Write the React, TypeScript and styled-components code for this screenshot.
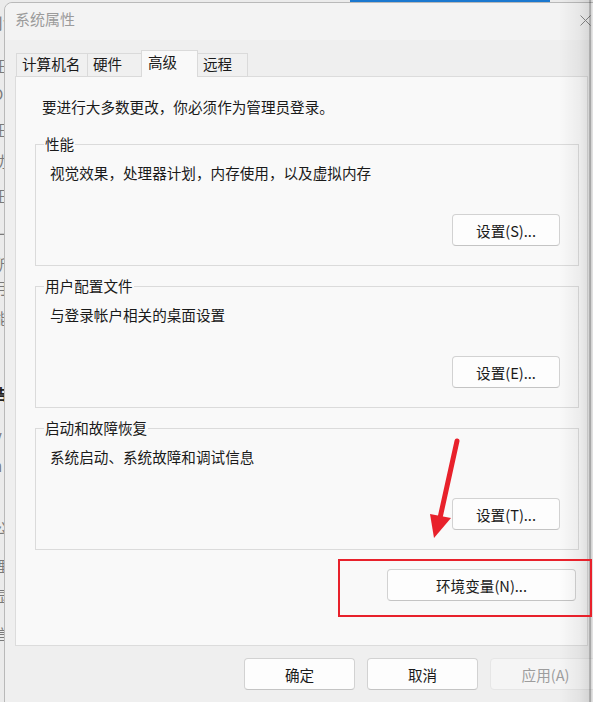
import React from "react"
import styled, { createGlobalStyle } from "styled-components"

const GlobalStyle = createGlobalStyle`
  html, body {
    margin: 0;
    padding: 0;
    background: #e9e9e9;
  }
  * {
    box-sizing: border-box;
  }
`

const FONT = `"Noto Sans CJK SC", "Noto Sans", "Liberation Sans", sans-serif`

const Screen = styled.div`
  position: relative;
  width: 593px;
  height: 702px;
  overflow: hidden;
  background: #ebebeb;
  font-family: ${FONT};
`

const Backdrop = styled.div`
  position: absolute;
  left: -7px;
  top: 0;
  display: flex;
  flex-direction: column;
  font-size: 15px;
  line-height: 17px;
  color: #7a7a7a;
`

const Fragment = styled.span<{ $top: number; $bold?: boolean }>`
  margin-top: ${({ $top }) => $top}px;
  font-weight: ${({ $bold }) => ($bold ? 700 : 400)};
  color: ${({ $bold }) => ($bold ? "#222" : "#7a7a7a")};
`

const TopStrip = styled.div`
  position: absolute;
  left: 350px;
  top: 0;
  width: 200px;
  height: 2px;
  background: #1b78cf;
`

const Window = styled.div`
  position: absolute;
  left: 4px;
  top: 2px;
  width: 640px;
  height: 720px;
  background: #efefef;
  border: 1px solid #b9b9b9;
  border-radius: 8px 0 0 0;
  display: flex;
  flex-direction: column;
`

const TitleBar = styled.div`
  position: relative;
  height: 37px;
  padding: 6px 0 0 10px;
  background: #f3f3f3;
  border-radius: 8px 0 0 0;
  font-size: 15px;
  line-height: 20px;
  color: #9b9b9b;
`

const CloseButton = styled.div`
  position: absolute;
  left: 575px;
  top: 12px;
  width: 11px;
  height: 11px;
  svg {
    display: block;
  }
`

const Body = styled.div`
  padding: 10px 0 0 10px;
  display: flex;
  flex-direction: column;
`

const TabRow = styled.div`
  display: flex;
  align-items: flex-end;
  height: 27px;
  margin-left: 1px;
  position: relative;
  z-index: 1;
  margin-bottom: -1px;
`

const Tab = styled.div<{ $w: number; $active?: boolean }>`
  width: ${({ $w }) => $w}px;
  height: ${({ $active }) => ($active ? 27 : 24)}px;
  padding: ${({ $active }) => ($active ? "2px 0 0 6px" : "1px 0 0 5px")};
  font-size: 14.6px;
  line-height: 18px;
  color: #1a1a1a;
  background: ${({ $active }) => ($active ? "#f9f9f9" : "#f0f0f0")};
  border: 1px solid #dadada;
  border-bottom: ${({ $active }) => ($active ? "none" : "1px solid #dadada")};
  margin-left: -1px;
  &:first-child {
    margin-left: 0;
  }
`

const Panel = styled.div`
  width: 573px;
  height: 570px;
  background: #f9f9f9;
  border: 1px solid #dcdcdc;
  padding: 20px 0 0 19px;
  display: flex;
  flex-direction: column;
`

const Notice = styled.div`
  padding-left: 7px;
  font-size: 14.6px;
  line-height: 20px;
  color: #1a1a1a;
`

const Group = styled.fieldset<{ $first?: boolean }>`
  margin: 0;
  margin-top: ${({ $first }) => ($first ? 18 : 11)}px;
  width: 544px;
  min-inline-size: 0;
  border: 1px solid #dbdbdb;
  padding: 0 18px 19px 14px;
  display: flex;
  flex-direction: column;
`

const GroupTitle = styled.legend`
  margin-left: -6px;
  padding: 0 1px;
  font-size: 14.6px;
  line-height: 18px;
  color: #1a1a1a;
`

const GroupText = styled.div`
  margin-top: 10px;
  font-size: 14.6px;
  line-height: 20px;
  color: #1a1a1a;
`

const ButtonRow = styled.div<{ $top?: number }>`
  display: flex;
  justify-content: flex-end;
  margin-top: ${({ $top }) => $top ?? 31}px;
`

const Button = styled.div<{ $w: number; $disabled?: boolean }>`
  width: ${({ $w }) => $w}px;
  height: 32px;
  display: flex;
  align-items: center;
  justify-content: center;
  background: ${({ $disabled }) => ($disabled ? "#f5f5f5" : "#fdfdfd")};
  border: 1px solid ${({ $disabled }) => ($disabled ? "#e6e6e6" : "#d2d2d2")};
  border-bottom-color: ${({ $disabled }) => ($disabled ? "#e6e6e6" : "#c4c4c4")};
  border-radius: 4px;
  font-size: 14.6px;
  color: ${({ $disabled }) => ($disabled ? "#9d9d9d" : "#1a1a1a")};
`

const EnvRow = styled.div`
  display: flex;
  justify-content: flex-end;
  width: 541px;
  margin-top: 19px;
`

const Footer = styled.div`
  display: flex;
  gap: 12px;
  padding: 12px 0 0 229px;
`

const Shade = styled.div`
  position: absolute;
  right: 0;
  top: 0;
  width: 34px;
  height: 702px;
  background: linear-gradient(
    to right,
    rgba(0, 0, 0, 0) 0%,
    rgba(0, 0, 0, 0.05) 60%,
    rgba(0, 0, 0, 0.11) 88%,
    rgba(0, 0, 0, 0.3) 90%,
    rgba(0, 0, 0, 0.3) 94%,
    rgba(0, 0, 0, 0.06) 96%
  );
  pointer-events: none;
`

const Highlight = styled.div`
  position: absolute;
  left: 338px;
  top: 559px;
  width: 254px;
  height: 58px;
  border: 2px solid #e8212b;
  pointer-events: none;
`

const Arrow = styled.svg`
  position: absolute;
  left: 420px;
  top: 432px;
  overflow: visible;
  pointer-events: none;
`

const groups = [
  { title: "性能", text: "视觉效果，处理器计划，内存使用，以及虚拟内存", button: "设置(S)..." },
  { title: "用户配置文件", text: "与登录帐户相关的桌面设置", button: "设置(E)..." },
  { title: "启动和故障恢复", text: "系统启动、系统故障和调试信息", button: "设置(T)..." },
]

const fragments = [
  { ch: "小", top: 14 },
  { ch: "田", top: 26 },
  { ch: "D", top: 11 },
  { ch: "田", top: 19 },
  { ch: "功", top: 14 },
  { ch: "田", top: 18 },
  { ch: "一", top: 21 },
  { ch: "所", top: 13 },
  { ch: "月", top: 7 },
  { ch: "能", top: 13 },
  { ch: "告", top: 59, bold: true },
  { ch: "V", top: 27 },
  { ch: "n", top: 11 },
  { ch: "公", top: 45 },
  { ch: "理", top: 21 },
  { ch: "显", top: 13 },
  { ch: "信", top: 21 },
  { ch: "l", top: 15 },
]

export default function App() {
  return (
    <Screen>
      <GlobalStyle />
      <Backdrop>
        {fragments.map((f, i) => (
          <Fragment key={i} $top={f.top} $bold={f.bold}>
            {f.ch}
          </Fragment>
        ))}
      </Backdrop>
      <TopStrip />
      <Window>
        <TitleBar>
          系统属性
          <CloseButton>
            <svg width="11" height="11" viewBox="0 0 11 11">
              <path d="M0.5 0.5 L10.5 10.5 M10.5 0.5 L0.5 10.5" stroke="#8a8a8a" strokeWidth="1" fill="none" />
            </svg>
          </CloseButton>
        </TitleBar>
        <Body>
          <TabRow>
            <Tab $w={72}>计算机名</Tab>
            <Tab $w={55}>硬件</Tab>
            <Tab $w={57} $active>高级</Tab>
            <Tab $w={51}>远程</Tab>
          </TabRow>
          <Panel>
            <Notice>要进行大多数更改，你必须作为管理员登录。</Notice>
            {groups.map((g, i) => (
              <Group key={g.title} $first={i === 0}>
                <GroupTitle>{g.title}</GroupTitle>
                <GroupText>{g.text}</GroupText>
                <ButtonRow>
                  <Button $w={108}>{g.button}</Button>
                </ButtonRow>
              </Group>
            ))}
            <EnvRow>
              <Button $w={189}>环境变量(N)...</Button>
            </EnvRow>
          </Panel>
          <Footer>
            <Button $w={111}>确定</Button>
            <Button $w={111}>取消</Button>
            <Button $w={111} $disabled>应用(A)</Button>
          </Footer>
        </Body>
      </Window>
      <Shade />
      <Highlight />
      <Arrow width="40" height="110" viewBox="0 0 40 110">
        <path d="M37 9 L20 86" stroke="#e8212b" strokeWidth="5" strokeLinecap="round" fill="none" />
        <path d="M10 82 L31 86 L14 106 Z" fill="#e8212b" />
      </Arrow>
    </Screen>
  )
}
